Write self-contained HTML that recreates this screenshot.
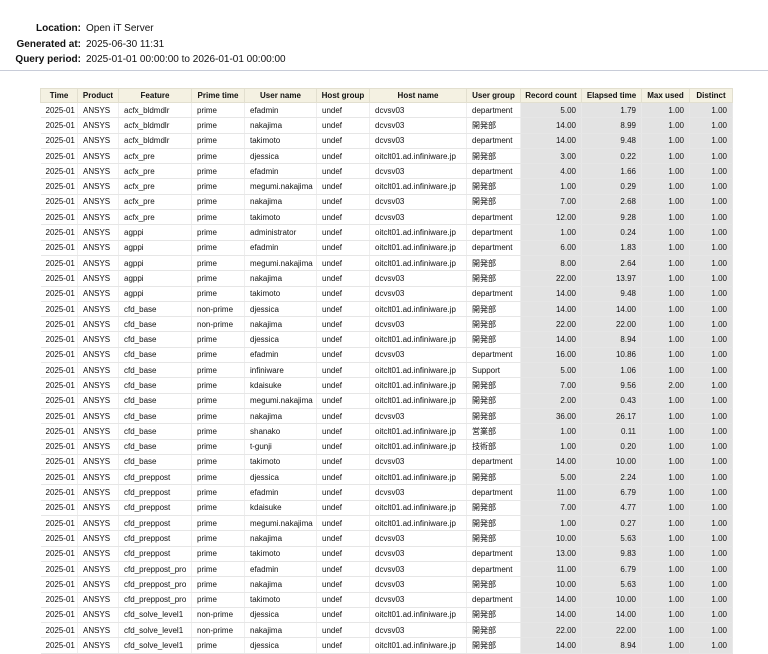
<!DOCTYPE html>
<html><head><meta charset="utf-8"><style>
body{margin:0;background:#fff;font-family:"Liberation Sans","Noto Sans CJK JP",sans-serif;color:#111;}
.meta{position:absolute;left:0;top:21px;font-size:10px;line-height:15.5px}
.meta div{white-space:nowrap}
.meta b{display:inline-block;width:81px;text-align:right;margin-right:5px}
hr{position:absolute;top:70px;left:0;width:768px;margin:0;border:0;border-top:1px solid #c8ccd8}
table{position:absolute;left:40px;top:88px;border-collapse:collapse;font-size:8px;table-layout:fixed;width:692px}
th{background:#f4f1e2;font-weight:bold;height:13px;padding:0 1px;border:1px solid #e2dfcf;font-size:8px;white-space:nowrap;overflow:hidden}
td{height:14.3px;padding:0 5px;border-bottom:1px solid #e6e6e6;border-right:1px solid #eee;white-space:nowrap;overflow:hidden}
td.n{background:#e3e3e3;text-align:right;border-right:1px solid #e8e8e8}
td.c{text-align:center}
</style></head><body>
<div class="meta">
<div><b>Location:</b>Open iT Server</div>
<div><b>Generated at:</b>2025-06-30 11:31</div>
<div><b>Query period:</b>2025-01-01 00:00:00 to 2026-01-01 00:00:00</div>
</div>
<hr>
<table>
<colgroup><col style="width:37px"><col style="width:41px"><col style="width:73px"><col style="width:53px"><col style="width:72px"><col style="width:53px"><col style="width:97px"><col style="width:54px"><col style="width:61px"><col style="width:60px"><col style="width:48px"><col style="width:43px"></colgroup>
<tr><th>Time</th><th>Product</th><th>Feature</th><th>Prime time</th><th>User name</th><th>Host group</th><th>Host name</th><th>User group</th><th>Record count</th><th>Elapsed time</th><th>Max used</th><th>Distinct</th></tr>
<script>
const R=[
["ANSYS","acfx_bldmdlr","prime","efadmin","dcvsv03","department","5.00","1.79","1.00"],
["ANSYS","acfx_bldmdlr","prime","nakajima","dcvsv03","開発部","14.00","8.99","1.00"],
["ANSYS","acfx_bldmdlr","prime","takimoto","dcvsv03","department","14.00","9.48","1.00"],
["ANSYS","acfx_pre","prime","djessica","oitclt01.ad.infiniware.jp","開発部","3.00","0.22","1.00"],
["ANSYS","acfx_pre","prime","efadmin","dcvsv03","department","4.00","1.66","1.00"],
["ANSYS","acfx_pre","prime","megumi.nakajima","oitclt01.ad.infiniware.jp","開発部","1.00","0.29","1.00"],
["ANSYS","acfx_pre","prime","nakajima","dcvsv03","開発部","7.00","2.68","1.00"],
["ANSYS","acfx_pre","prime","takimoto","dcvsv03","department","12.00","9.28","1.00"],
["ANSYS","agppi","prime","administrator","oitclt01.ad.infiniware.jp","department","1.00","0.24","1.00"],
["ANSYS","agppi","prime","efadmin","oitclt01.ad.infiniware.jp","department","6.00","1.83","1.00"],
["ANSYS","agppi","prime","megumi.nakajima","oitclt01.ad.infiniware.jp","開発部","8.00","2.64","1.00"],
["ANSYS","agppi","prime","nakajima","dcvsv03","開発部","22.00","13.97","1.00"],
["ANSYS","agppi","prime","takimoto","dcvsv03","department","14.00","9.48","1.00"],
["ANSYS","cfd_base","non-prime","djessica","oitclt01.ad.infiniware.jp","開発部","14.00","14.00","1.00"],
["ANSYS","cfd_base","non-prime","nakajima","dcvsv03","開発部","22.00","22.00","1.00"],
["ANSYS","cfd_base","prime","djessica","oitclt01.ad.infiniware.jp","開発部","14.00","8.94","1.00"],
["ANSYS","cfd_base","prime","efadmin","dcvsv03","department","16.00","10.86","1.00"],
["ANSYS","cfd_base","prime","infiniware","oitclt01.ad.infiniware.jp","Support","5.00","1.06","1.00"],
["ANSYS","cfd_base","prime","kdaisuke","oitclt01.ad.infiniware.jp","開発部","7.00","9.56","2.00"],
["ANSYS","cfd_base","prime","megumi.nakajima","oitclt01.ad.infiniware.jp","開発部","2.00","0.43","1.00"],
["ANSYS","cfd_base","prime","nakajima","dcvsv03","開発部","36.00","26.17","1.00"],
["ANSYS","cfd_base","prime","shanako","oitclt01.ad.infiniware.jp","営業部","1.00","0.11","1.00"],
["ANSYS","cfd_base","prime","t-gunji","oitclt01.ad.infiniware.jp","技術部","1.00","0.20","1.00"],
["ANSYS","cfd_base","prime","takimoto","dcvsv03","department","14.00","10.00","1.00"],
["ANSYS","cfd_preppost","prime","djessica","oitclt01.ad.infiniware.jp","開発部","5.00","2.24","1.00"],
["ANSYS","cfd_preppost","prime","efadmin","dcvsv03","department","11.00","6.79","1.00"],
["ANSYS","cfd_preppost","prime","kdaisuke","oitclt01.ad.infiniware.jp","開発部","7.00","4.77","1.00"],
["ANSYS","cfd_preppost","prime","megumi.nakajima","oitclt01.ad.infiniware.jp","開発部","1.00","0.27","1.00"],
["ANSYS","cfd_preppost","prime","nakajima","dcvsv03","開発部","10.00","5.63","1.00"],
["ANSYS","cfd_preppost","prime","takimoto","dcvsv03","department","13.00","9.83","1.00"],
["ANSYS","cfd_preppost_pro","prime","efadmin","dcvsv03","department","11.00","6.79","1.00"],
["ANSYS","cfd_preppost_pro","prime","nakajima","dcvsv03","開発部","10.00","5.63","1.00"],
["ANSYS","cfd_preppost_pro","prime","takimoto","dcvsv03","department","14.00","10.00","1.00"],
["ANSYS","cfd_solve_level1","non-prime","djessica","oitclt01.ad.infiniware.jp","開発部","14.00","14.00","1.00"],
["ANSYS","cfd_solve_level1","non-prime","nakajima","dcvsv03","開発部","22.00","22.00","1.00"],
["ANSYS","cfd_solve_level1","prime","djessica","oitclt01.ad.infiniware.jp","開発部","14.00","8.94","1.00"]];
for(const r of R){document.write(`<tr><td class="c">2025-01</td><td>${r[0]}</td><td>${r[1]}</td><td>${r[2]}</td><td>${r[3]}</td><td>undef</td><td>${r[4]}</td><td>${r[5]}</td><td class="n">${r[6]}</td><td class="n">${r[7]}</td><td class="n">${r[8]}</td><td class="n">1.00</td></tr>`)}
</script>
</table>
</body></html>
